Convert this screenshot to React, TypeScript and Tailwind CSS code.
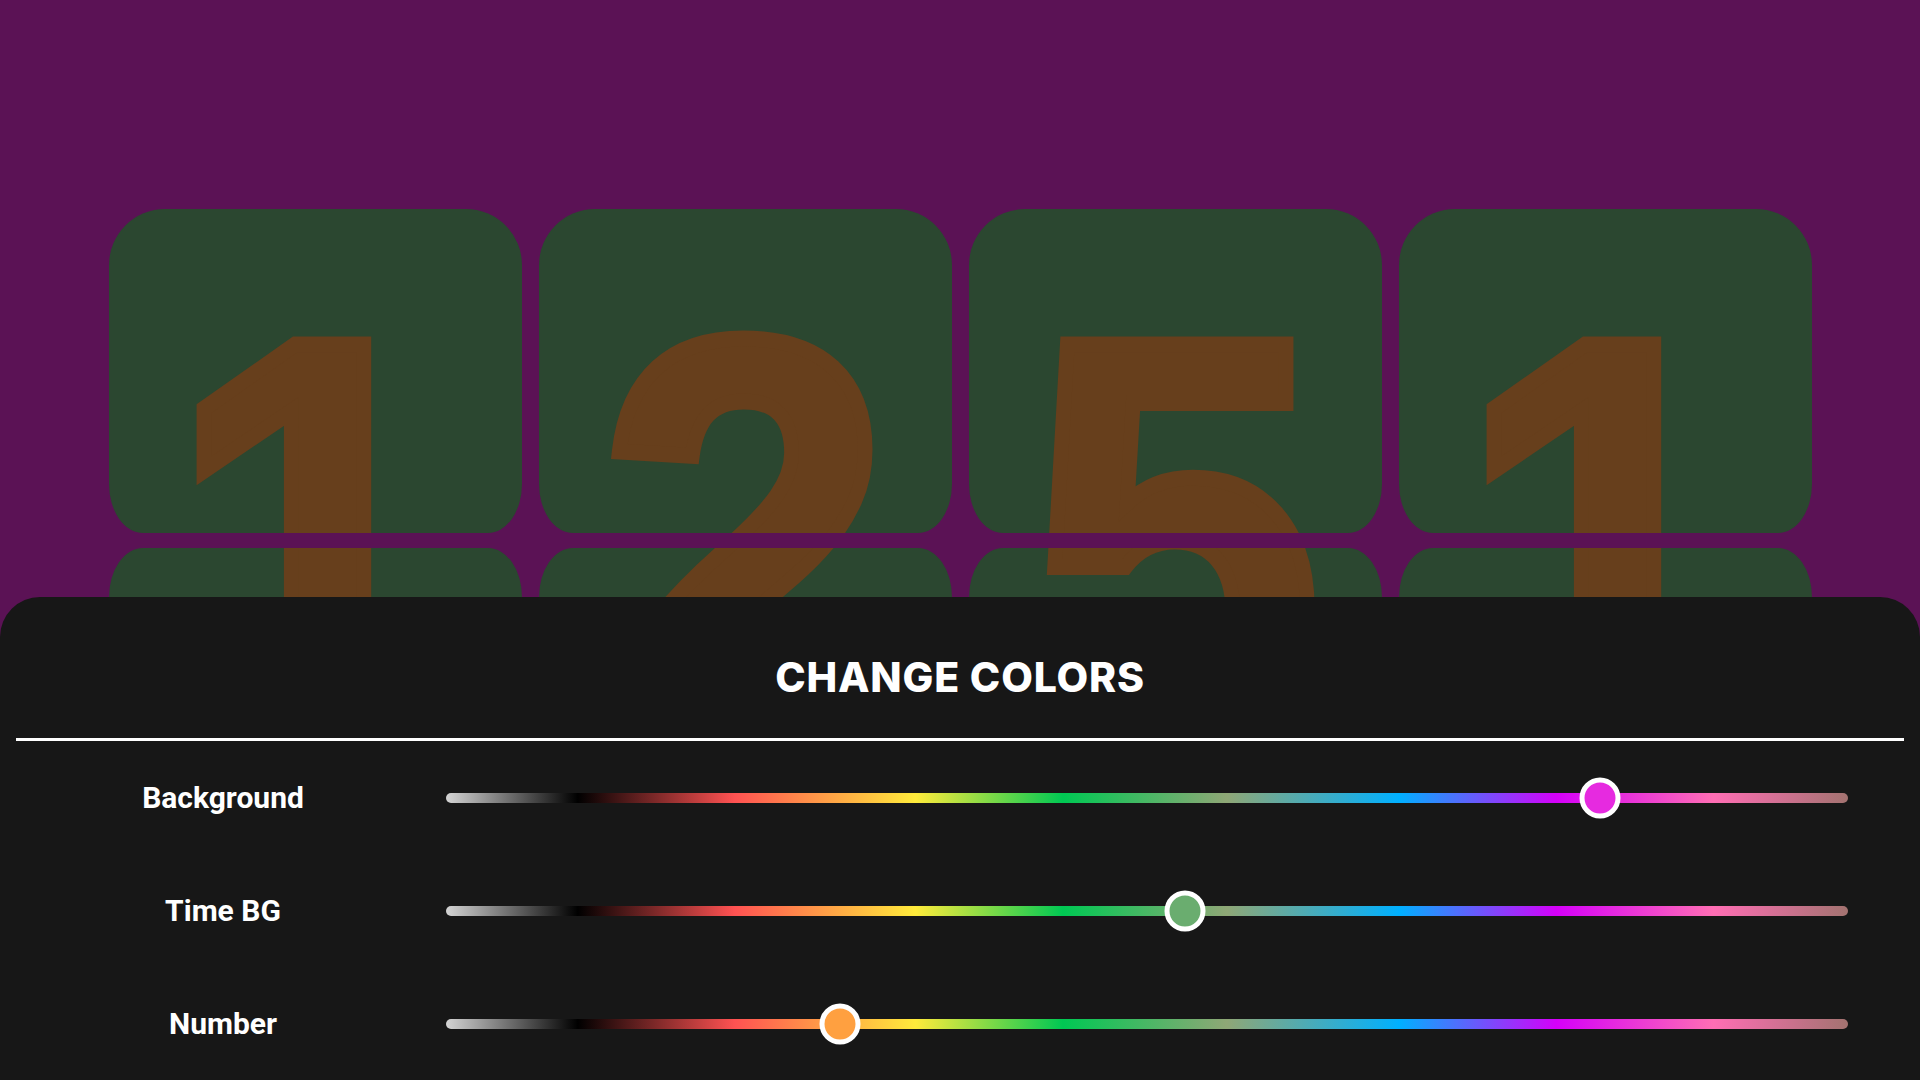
import React from 'react';

const digits = ['1', '2', '5', '1'];

const TRACK =
  'linear-gradient(to right, #d4d4d4 0%, #000000 9.4%, #ff5252 20.6%, #ffeb3b 33.5%, #00c853 44%, #8fa776 55.7%, #00b0ff 68%, #d500f9 79.2%, #ff6eb4 90.4%, #a37370 100%)';

interface SliderRow {
  label: string;
  value: number;
  color: string;
}

const rows: SliderRow[] = [
  { label: 'Background', value: 82.3, color: '#e62ae0' },
  { label: 'Time BG', value: 52.7, color: '#6aad6f' },
  { label: 'Number', value: 28.1, color: '#ffa040' },
];

function FlipDigit({ value }: { value: string }) {
  const digit = (
    <div
      className="h-[663px] w-full shrink-0 flex items-center justify-center text-[575px] leading-none font-bold text-[#673f1c] [-webkit-text-stroke:16px_#673f1c]"
      style={{ fontFamily: '"Liberation Sans", Arial, sans-serif' }}
    >
      <span className="inline-block scale-x-[0.92]">{value}</span>
    </div>
  );

  return (
    <div className="w-[413px] flex flex-col gap-[15px]">
      <div className="h-[324px] overflow-hidden bg-[#2b4730] rounded-[56px_56px_34px_34px/56px_56px_49px_49px]">
        {digit}
      </div>
      <div className="h-[324px] overflow-hidden bg-[#2b4730] rounded-[34px_34px_56px_56px/49px_49px_56px_56px]">
        <div className="-mt-[339px]">{digit}</div>
      </div>
    </div>
  );
}

function ColorSlider({ value, color }: { value: number; color: string }) {
  return (
    <div className="relative ml-4 w-[1402px] h-[10px] rounded-full" style={{ background: TRACK }}>
      <div
        className="absolute top-1/2 w-[41px] h-[41px] -translate-x-1/2 -translate-y-1/2 rounded-full border-[5px] border-white"
        style={{ left: `${value}%`, backgroundColor: color }}
      />
    </div>
  );
}

export default function App() {
  return (
    <div className="relative w-full h-[1080px] overflow-hidden bg-[#5b1255]">
      <div className="h-full flex items-center justify-center gap-[17px]">
        {digits.map((d, i) => (
          <FlipDigit key={i} value={d} />
        ))}
      </div>

      {/* color panel drawer */}
      <div className="absolute inset-x-0 bottom-0 h-[483px] bg-[#171717] rounded-t-[40px] px-4">
        <div className="h-[141px] pt-[60px] flex justify-center">
          <h2
            className="text-[41px] leading-none font-extrabold text-white tracking-[0.02em]"
            style={{ fontFamily: 'Inter, "Noto Sans", sans-serif' }}
          >
            CHANGE COLORS
          </h2>
        </div>
        <div className="h-[3px] bg-white" />
        {rows.map((row) => (
          <div key={row.label} className="h-[113px] flex items-center">
            <div
              className="w-[414px] text-center text-[30px] font-bold text-white"
              style={{ fontFamily: 'Roboto, "Noto Sans", sans-serif' }}
            >
              {row.label}
            </div>
            <ColorSlider value={row.value} color={row.color} />
          </div>
        ))}
      </div>
    </div>
  );
}
